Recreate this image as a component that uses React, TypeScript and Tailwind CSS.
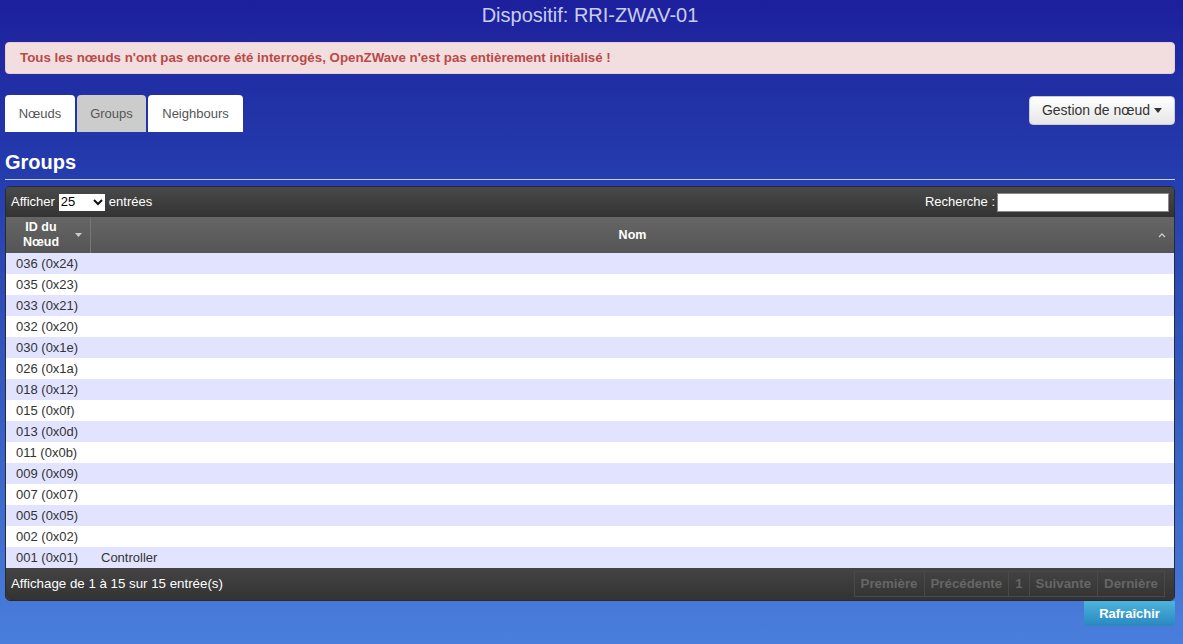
import React from 'react';

const rows: [string, string][] = [
  ['036 (0x24)', ''],
  ['035 (0x23)', ''],
  ['033 (0x21)', ''],
  ['032 (0x20)', ''],
  ['030 (0x1e)', ''],
  ['026 (0x1a)', ''],
  ['018 (0x12)', ''],
  ['015 (0x0f)', ''],
  ['013 (0x0d)', ''],
  ['011 (0x0b)', ''],
  ['009 (0x09)', ''],
  ['007 (0x07)', ''],
  ['005 (0x05)', ''],
  ['002 (0x02)', ''],
  ['001 (0x01)', 'Controller'],
];

const pages = ['Première', 'Précédente', '1', 'Suivante', 'Dernière'];

export default function App() {
  return (
    <div className="min-h-[644px] bg-gradient-to-b from-[#1d1f9c] to-[#4a7edc] pl-[5px] pr-[8px] pb-4 font-['Liberation_Sans',Arial,sans-serif]">
      {/* Title */}
      <h1 className="pt-[3px] text-center text-[20px] leading-[24px] text-[#c9cdf2]">Dispositif: RRI-ZWAV-01</h1>

      {/* Alert */}
      <div className="mt-[15px] flex h-[32px] items-center rounded-[4px] border border-[#ebccd1] bg-[#f2dede] px-[14px] text-[13.3px] font-bold text-[#b94a48]">
        Tous les nœuds n'ont pas encore été interrogés, OpenZWave n'est pas entièrement initialisé !
      </div>

      {/* Tabs + menu */}
      <div className="mt-[21px] flex items-start justify-between">
        <div className="flex gap-[2px]">
          <div className="flex h-[37px] w-[70px] items-center justify-center rounded-t-[4px] bg-white text-[13px] text-[#555]">Nœuds</div>
          <div className="flex h-[37px] w-[69px] items-center justify-center rounded-t-[4px] bg-[#cccccc] text-[13px] text-[#555]">Groups</div>
          <div className="flex h-[37px] w-[95px] items-center justify-center rounded-t-[4px] bg-white text-[13px] text-[#555]">Neighbours</div>
        </div>
        <button className="mt-[1px] flex h-[29px] w-[146px] items-center justify-center gap-[4px] rounded-[4px] border border-[#ccc] bg-gradient-to-b from-white to-[#e6e6e6] text-[14px] text-[#333]">
          Gestion de nœud
          <svg width="8" height="5" viewBox="0 0 8 5"><path d="M0 0h8L4 5z" fill="#333" /></svg>
        </button>
      </div>

      {/* Heading */}
      <h2 className="mt-[18px] text-[20px] font-bold leading-[24px] text-white">Groups</h2>
      <div className="mt-[5px] h-px bg-[#c8d0f0]" />

      {/* Table */}
      <div className="mt-[6px] overflow-hidden rounded-[5px] border border-[#2a2a2a]">
        <div className="flex h-[30px] items-center justify-between bg-gradient-to-b from-[#4a4a4a] to-[#333] px-[5px] text-[13px] text-white">
          <div className="flex items-center gap-[4px]">
            Afficher
            <span className="flex h-[17px] w-[46px] items-center justify-between bg-white px-[2px] text-[13px] text-black">
              25
              <svg width="10" height="7" viewBox="0 0 10 7"><path d="M1 1l4 4 4-4" stroke="#111" strokeWidth="2" fill="none" /></svg>
            </span>
            entrées
          </div>
          <div className="flex items-center gap-[2px]">
            Recherche :
            <span className="h-[19px] w-[172px] border border-[#888] bg-white" />
          </div>
        </div>

        <div className="flex h-[36px] bg-gradient-to-b from-[#666] to-[#555] text-[12.5px] font-bold text-white">
          <div className="relative flex w-[85px] items-center justify-center border-r border-[#777] pr-[14px] text-center leading-[15px]">
            <span>ID du<br />Nœud</span>
            <svg className="absolute right-[8px] top-[16px]" width="7" height="4" viewBox="0 0 7 4"><path d="M0 0h7L3.5 4z" fill="#ccc" /></svg>
          </div>
          <div className="relative flex flex-1 items-center justify-center">
            Nom
            <svg className="absolute right-[8px] top-[16px]" width="8" height="5" viewBox="0 0 8 5"><path d="M1 4l3-3 3 3" stroke="#ccc" strokeWidth="1.3" fill="none" /></svg>
          </div>
        </div>

        {rows.map(([id, name], i) => (
          <div
            key={id}
            className={`flex h-[21px] items-center text-[13px] text-[#333] ${i % 2 === 0 ? 'bg-[#e2e4ff]' : 'bg-white'}`}
          >
            <div className="w-[85px] pl-[10px]">{id}</div>
            <div className="pl-[10px]">{name}</div>
          </div>
        ))}

        <div className="flex h-[32px] items-center justify-between bg-gradient-to-b from-[#444] to-[#333] pl-[5px] pr-[9px] text-[13.3px] text-white">
          <span>Affichage de 1 à 15 sur 15 entrée(s)</span>
          <div className="flex border border-[#4a4a4a] text-[13.3px] font-bold text-[#666]">
            {pages.map((p) => (
              <span key={p} className="border-r border-[#4a4a4a] px-[6px] py-[2px] last:border-r-0">{p}</span>
            ))}
          </div>
        </div>
      </div>

      {/* Refresh */}
      <div className="flex justify-end">
        <button className="h-[25px] w-[91px] rounded-b-[4px] bg-gradient-to-b from-[#4cb4dc] to-[#2a88c0] text-[13px] font-bold text-white">
          Rafraîchir
        </button>
      </div>
    </div>
  );
}
